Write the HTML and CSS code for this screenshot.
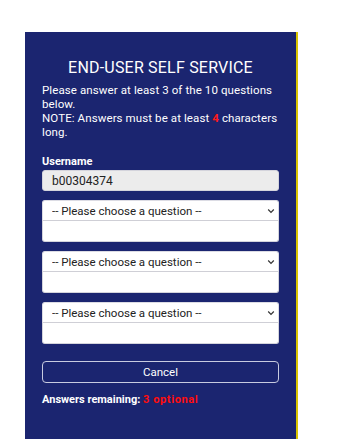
FILE: index.html
```html
<!DOCTYPE html>
<html>
  <head>
    <meta charset="utf-8">
    <title>End-User Self Service</title>
    <link rel="stylesheet" href="styles.css">
  </head>
<body>
  <div id="panel">
    <h1 class="title">END-USER SELF SERVICE</h1>
    <p class="intro">Please answer at least 3 of the 10 questions below.<br>
    NOTE: Answers must be at least <span class="red">4</span> characters long.</p>

    <form>
      <label class="label" for="user">Username</label>
      <input id="user" class="input readonly" type="text" value="b00304374" readonly>

      <div class="qa">
        <div class="selectwrap">
          <select class="select"><option>-- Please choose a question --</option></select>
          <svg class="chev" width="8" height="6" viewBox="0 0 8 6"><path d="M1.2 1.5 L4 4.3 L6.8 1.5" fill="none" stroke="#333" stroke-width="1.2"/></svg>
        </div>
        <input class="input answer" type="text">
      </div>

      <div class="qa">
        <div class="selectwrap">
          <select class="select"><option>-- Please choose a question --</option></select>
          <svg class="chev" width="8" height="6" viewBox="0 0 8 6"><path d="M1.2 1.5 L4 4.3 L6.8 1.5" fill="none" stroke="#333" stroke-width="1.2"/></svg>
        </div>
        <input class="input answer" type="text">
      </div>

      <div class="qa">
        <div class="selectwrap">
          <select class="select"><option>-- Please choose a question --</option></select>
          <svg class="chev" width="8" height="6" viewBox="0 0 8 6"><path d="M1.2 1.5 L4 4.3 L6.8 1.5" fill="none" stroke="#333" stroke-width="1.2"/></svg>
        </div>
        <input class="input answer" type="text">
      </div>

      <button class="cancel" type="button">Cancel</button>
    </form>

    <div class="remaining">Answers remaining: <span class="optional">3 optional</span></div>
  </div>
</body>
</html>
```

FILE: styles.css
```css
html, body {
  margin: 0;
  background: #ffffff;
  height: 100%;
}
body {
  font-family: Roboto, "Liberation Sans", Arial, sans-serif;
  overflow: hidden;
}
#panel { /* dark blue card */
  margin: 32px 0 0 25px;
  width: 237px;
  min-height: 381px;
  padding: 26px 17px 0 17px;
  background: #1b2570;
  border-right: 2px solid #d9c400;
  color: #ffffff;
}
.title {
  margin: 0;
  font-size: 16px;
  line-height: 20px;
  font-weight: 400;
  text-align: center;
  letter-spacing: 0.2px;
}
.intro {
  margin: 5px 0 0 0;
  font-size: 11.5px;
  line-height: 14px;
  font-weight: 400;
  letter-spacing: 0.1px;
}
.red { color: #ff1a1a; font-weight: 700; }

form {
  display: flex;
  flex-direction: column;
  margin-top: 16px;
}
.label {
  font-size: 11px;
  line-height: 14px;
  font-weight: 700;
  margin-bottom: 1px;
}
.input {
  display: block;
  width: 100%;
  height: 21px;
  box-sizing: border-box;
  border: 1px solid #d4d4dc;
  border-radius: 3px;
  background: #ffffff;
  padding: 0 9px;
  font-family: inherit;
  font-size: 12px;
  color: #222;
  margin: 0;
  outline: none;
}
.readonly {
  background: #ececec;
}
.qa {
  display: flex;
  flex-direction: column;
  margin-top: 9px;
}
.selectwrap {
  position: relative;
}
.select {
  display: block;
  width: 100%;
  height: 21px;
  box-sizing: border-box;
  -webkit-appearance: none;
  -moz-appearance: none;
  appearance: none;
  border: 1px solid #dcdce4;
  border-bottom-color: #cfcfd6;
  border-radius: 3px 3px 0 0;
  background: #ffffff;
  padding: 0 9px;
  font-family: inherit;
  font-size: 11.5px;
  color: #222;
  margin: 0;
  outline: none;
}
.chev {
  position: absolute;
  right: 4px;
  top: 8px;
}
.answer {
  border-radius: 0 0 3px 3px;
  border-top: none;
}
.cancel {
  margin-top: 17px;
  height: 22px;
  background: transparent;
  border: 1px solid #c8cbe0;
  border-radius: 4px;
  color: #ffffff;
  font-family: inherit;
  font-size: 11.5px;
  font-weight: 400;
  cursor: pointer;
}
.remaining {
  margin-top: 10px;
  font-size: 11px;
  line-height: 14px;
  font-weight: 700;
}
.optional {
  color: #ff0d0d;
  letter-spacing: 0.6px;
}
```
